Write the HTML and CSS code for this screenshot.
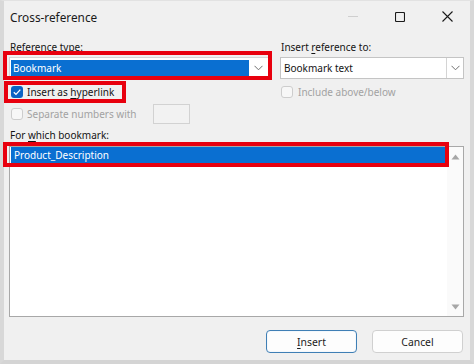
FILE: index.html
```html
<!DOCTYPE html>
<html lang="en">
<head>
<meta charset="utf-8">
<title>Cross-reference</title>
<link rel="stylesheet" href="styles.css">
</head>
<body>
<div class="window">
  <div class="titlebar">
    <span class="title">Cross-reference</span>
    <div class="caption">
      <span class="cap-min"></span>
      <svg class="cap-icon" width="10" height="10" viewBox="0 0 10 10"><rect x="0.5" y="0.5" width="9" height="9" rx="1" fill="none" stroke="#1a1a1a" stroke-width="1.1"/></svg>
      <svg class="cap-icon" width="11" height="11" viewBox="0 0 11 11"><path d="M0.5 0.5 L10.5 10.5 M10.5 0.5 L0.5 10.5" stroke="#1a1a1a" stroke-width="1.1"/></svg>
    </div>
  </div>

  <div class="content">
    <div class="cols">
      <div class="col">
        <div class="label">Reference type:</div>
        <div class="combo combo-left">
          <span class="combo-sel">Bookmark</span>
          <span class="combo-arrow plain">
            <svg width="9" height="6" viewBox="0 0 9 6"><path d="M0.5 0.8 L4.5 4.8 L8.5 0.8" fill="none" stroke="#707070" stroke-width="1"/></svg>
          </span>
        </div>
        <div class="check-row row1">
          <span class="box checked">
            <svg width="10" height="10" viewBox="0 0 10 10"><path d="M1.8 5.2 L4 7.4 L8.3 2.6" fill="none" stroke="#fff" stroke-width="1.3"/></svg>
          </span>
          <span class="check-text">Insert as <u>h</u>yperlink</span>
        </div>
        <div class="check-row row2">
          <span class="box disabled"></span>
          <span class="check-text muted">Separate numbers with</span>
          <span class="sep-input"></span>
        </div>
      </div>
      <div class="col">
        <div class="label">Insert <u>r</u>eference to:</div>
        <div class="combo">
          <span class="combo-text">Bookmark text</span>
          <span class="combo-arrow">
            <svg width="9" height="6" viewBox="0 0 9 6"><path d="M0.5 0.8 L4.5 4.8 L8.5 0.8" fill="none" stroke="#707070" stroke-width="1"/></svg>
          </span>
        </div>
        <div class="check-row row1">
          <span class="box disabled"></span>
          <span class="check-text muted">Include above/below</span>
        </div>
      </div>
    </div>

    <div class="label label-list">For <u>w</u>hich bookmark:</div>
    <div class="listbox">
      <div class="list-items">
        <div class="item selected">Product_Description</div>
      </div>
      <div class="scrollbar">
        <svg width="9" height="6" viewBox="0 0 9 6"><path d="M0.5 5.5 L4.5 0.5 L8.5 5.5 Z" fill="#a6a6a6"/></svg>
        <svg width="9" height="6" viewBox="0 0 9 6"><path d="M0.5 0.5 L4.5 5.5 L8.5 0.5 Z" fill="#a6a6a6"/></svg>
      </div>
    </div>

    <div class="buttons">
      <button class="btn default"><u>I</u>nsert</button>
      <button class="btn">Cancel</button>
    </div>
  </div>

  <div class="mark mark-combo"></div>
  <div class="mark mark-check"></div>
  <div class="mark mark-list"></div>
</div>
</body>
</html>
```

FILE: styles.css
```css
* { box-sizing: border-box; }

html, body {
  margin: 0;
  padding: 0;
}

body {
  width: 474px;
  height: 364px;
  overflow: hidden;
  background: #f0f0f0;
  font-family: "Noto Sans", "Open Sans", sans-serif;
  font-size: 10px;
  color: #141414;
}

u { text-decoration: underline; text-underline-offset: 2px; }

.window {
  position: relative;
  width: 474px;
  height: 364px;
  background: #f0f0f0;
  border-top: 1px solid #e2e2e2;
  border-left: 4px solid #d8d8d8;
  border-right: 4px solid #d8d8d8;
  border-bottom: 4px solid #d4d4d4;
}

.titlebar {
  height: 31px;
  display: flex;
  align-items: center;
  justify-content: space-between;
}

.title {
  padding-left: 6px;
  font-size: 11.8px;
  color: #1a1a1a;
}

.caption {
  display: flex;
  align-items: center;
  gap: 37px;
  padding-right: 17px;
}

.cap-min {
  width: 10px;
  height: 1px;
  background: #cfcfcf;
}

.cap-icon { display: block; }

.content {
  padding: 8px 6px 0 5px;
}

.cols {
  display: grid;
  grid-template-columns: 260px 184px;
  column-gap: 11px;
}

.label {
  height: 15px;
  line-height: 15px;
  padding-left: 1px;
  white-space: nowrap;
}

.combo {
  margin-top: 2px;
  height: 22px;
  background: #fff;
  border: 1px solid #c4c4c4;
  display: flex;
  align-items: stretch;
}

.combo-left {
  border-color: #d6d6d6;
}

.combo-sel {
  flex: 1;
  margin: 2px 0 2px 1px;
  background: #0a6fd1;
  color: #fff;
  line-height: 16px;
  padding-left: 2px;
}

.combo-text {
  flex: 1;
  line-height: 20px;
  padding-left: 3px;
}

.combo-arrow {
  width: 17px;
  display: flex;
  align-items: center;
  justify-content: center;
  border-left: 1px solid #d4d4d4;
}

.combo-arrow.plain {
  width: 19px;
  border-left: none;
}

.check-row {
  display: flex;
  align-items: center;
  white-space: nowrap;
}

.row1 {
  margin-top: 3px;
  height: 20px;
}

.row2 {
  margin-top: 1px;
  height: 22px;
}

.box {
  width: 12px;
  height: 12px;
  border-radius: 3px;
  margin-left: 1px;
  margin-right: 5px;
  display: flex;
  align-items: center;
  justify-content: center;
  flex: none;
}

.col:first-child .box { margin-left: 2px; margin-right: 4px; }

.box.checked {
  background: #0b63c4;
}

.box.disabled {
  background: #f7f7f7;
  border: 1px solid #cdcdcd;
}

.check-text.muted { color: #a2a2a2; }

.sep-input {
  margin-left: 16px;
  width: 37px;
  height: 20px;
  border: 1px solid #d2d2d2;
  background: #f2f2f2;
}

.label-list {
  margin-top: 3px;
}

.listbox {
  margin-top: 3px;
  height: 171px;
  background: #fff;
  border: 1px solid #a8a8a8;
  display: flex;
}

.list-items {
  flex: 1;
  padding: 0 2px 0 1px;
}

.item {
  height: 16px;
  line-height: 16px;
  padding-left: 3px;
}

.item.selected {
  background: #0a6fd1;
  color: #fff;
}

.scrollbar {
  width: 16px;
  background: #fafafa;
  display: flex;
  flex-direction: column;
  align-items: center;
  justify-content: space-between;
  padding: 7px 0 6px;
}

.scrollbar svg { display: block; }

.buttons {
  margin-top: 13px;
  display: flex;
  justify-content: flex-end;
  gap: 15px;
  padding-right: 1px;
}

.btn {
  height: 23px;
  width: 91px;
  border-radius: 4px;
  background: #fdfdfd;
  border: 1px solid #d0d0d0;
  font-family: inherit;
  font-size: 10.4px;
  color: #1b1b1b;
  padding: 0;
}

.btn.default {
  border-color: #3f7fb5;
  box-shadow: inset 0 0 0 1px #f4f8fc;
}

.mark {
  position: absolute;
  border: 4px solid #e8000e;
  pointer-events: none;
}

.mark-combo {
  left: -1px;
  top: 50px;
  width: 269px;
  height: 29px;
}

.mark-check {
  left: 0;
  top: 80px;
  width: 122px;
  height: 22px;
}

.mark-list {
  left: -1px;
  top: 141px;
  width: 446px;
  height: 25px;
}
```
